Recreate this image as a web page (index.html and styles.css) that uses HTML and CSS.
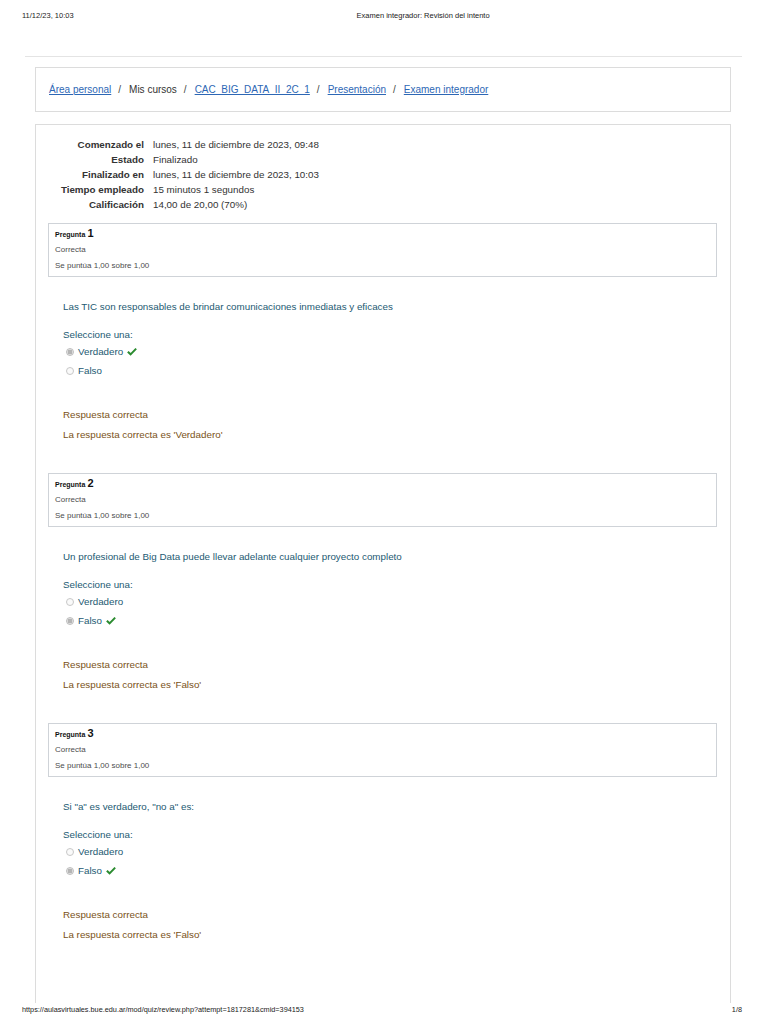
FILE: index.html
```html
<!DOCTYPE html>
<html lang="es">
<head>
<meta charset="utf-8">
<title>Examen integrador: Revisión del intento</title>
<link rel="stylesheet" href="styles.css">
</head>
<body>
<div class="page">
  <header class="print-head">
    <span class="print-date">11/12/23, 10:03</span>
    <span class="print-title">Examen integrador: Revisión del intento</span>
  </header>
  <hr class="rule">

  <nav class="crumbs">
    <a href="#">Área personal</a><span class="sep">/</span><span>Mis cursos</span><span class="sep">/</span><a href="#">CAC_BIG_DATA_II_2C_1</a><span class="sep">/</span><a href="#">Presentación</a><span class="sep">/</span><a href="#">Examen integrador</a>
  </nav>

  <main class="main">
    <table class="summary">
      <tr><th>Comenzado el</th><td>lunes, 11 de diciembre de 2023, 09:48</td></tr>
      <tr><th>Estado</th><td>Finalizado</td></tr>
      <tr><th>Finalizado en</th><td>lunes, 11 de diciembre de 2023, 10:03</td></tr>
      <tr><th>Tiempo empleado</th><td>15 minutos 1 segundos</td></tr>
      <tr><th>Calificación</th><td>14,00 de 20,00 (70%)</td></tr>
    </table>

    <section class="que">
      <div class="info">
        <div class="qno"><span class="qlabel">Pregunta</span> <span class="qnum">1</span></div>
        <div class="state">Correcta</div>
        <div class="grade">Se puntúa 1,00 sobre 1,00</div>
      </div>
      <div class="content">
        <p class="qtext">Las TIC son responsables de brindar comunicaciones inmediatas y eficaces</p>
        <p class="prompt">Seleccione una:</p>
        <div class="opt"><span class="radio checked"></span>Verdadero <svg class="tick" viewBox="0 0 12 10"><path d="M1 5.2 L4.3 8.4 L11 1.6" fill="none" stroke="currentColor" stroke-width="2.4"/></svg></div>
        <div class="opt"><span class="radio"></span>Falso</div>
        <p class="fb-title">Respuesta correcta</p>
        <p class="fb">La respuesta correcta es 'Verdadero'</p>
      </div>
    </section>

    <section class="que">
      <div class="info">
        <div class="qno"><span class="qlabel">Pregunta</span> <span class="qnum">2</span></div>
        <div class="state">Correcta</div>
        <div class="grade">Se puntúa 1,00 sobre 1,00</div>
      </div>
      <div class="content">
        <p class="qtext">Un profesional de Big Data puede llevar adelante cualquier proyecto completo</p>
        <p class="prompt">Seleccione una:</p>
        <div class="opt"><span class="radio"></span>Verdadero</div>
        <div class="opt"><span class="radio checked"></span>Falso <svg class="tick" viewBox="0 0 12 10"><path d="M1 5.2 L4.3 8.4 L11 1.6" fill="none" stroke="currentColor" stroke-width="2.4"/></svg></div>
        <p class="fb-title">Respuesta correcta</p>
        <p class="fb">La respuesta correcta es 'Falso'</p>
      </div>
    </section>

    <section class="que">
      <div class="info">
        <div class="qno"><span class="qlabel">Pregunta</span> <span class="qnum">3</span></div>
        <div class="state">Correcta</div>
        <div class="grade">Se puntúa 1,00 sobre 1,00</div>
      </div>
      <div class="content">
        <p class="qtext">Si "a" es verdadero, "no a" es:</p>
        <p class="prompt">Seleccione una:</p>
        <div class="opt"><span class="radio"></span>Verdadero</div>
        <div class="opt"><span class="radio checked"></span>Falso <svg class="tick" viewBox="0 0 12 10"><path d="M1 5.2 L4.3 8.4 L11 1.6" fill="none" stroke="currentColor" stroke-width="2.4"/></svg></div>
        <p class="fb-title">Respuesta correcta</p>
        <p class="fb">La respuesta correcta es 'Falso'</p>
      </div>
    </section>
  </main>

  <footer class="print-foot">
    <span>https://aulasvirtuales.bue.edu.ar/mod/quiz/review.php?attempt=1817281&amp;cmid=394153</span>
    <span>1/8</span>
  </footer>
</div>
</body>
</html>
```

FILE: styles.css
```css
* { box-sizing: border-box; }
html, body { margin: 0; padding: 0; background: #fff; }
body {
  font-family: "Liberation Sans", Arial, Helvetica, sans-serif;
  color: #333;
  width: 768px;
  height: 1024px;
  overflow: hidden;
}
.page { width: 768px; }

.print-head {
  display: flex;
  padding: 11px 0 0 22px;
  font-size: 7.5px;
  line-height: 9px;
  color: #222;
  height: 20px;
}
.print-title { margin-left: 283px; }

.rule {
  margin: 36px 26px 0 25px;
  border: 0;
  border-top: 1px solid #e4e4e4;
  height: 0;
}

.crumbs {
  margin: 10px 37px 0 35px;
  height: 45px;
  border: 1px solid #dcdcdc;
  display: flex;
  align-items: center;
  padding-left: 13px;
  font-size: 10px;
  color: #333;
}
.crumbs a { color: #2d67b5; text-decoration: underline; }
.crumbs .sep { margin: 0 8px 0 7px; color: #444; }

.main {
  margin: 12px 37px 0 35px;
  height: 879px;
  border: 1px solid #dcdcdc;
  border-bottom: 0;
  padding: 12px 13px 0 12px;
}

.summary {
  border-collapse: collapse;
  font-size: 9.8px;
  line-height: 15px;
  color: #333;
}
.summary th {
  width: 105px;
  text-align: right;
  font-weight: bold;
  padding: 0 9px 0 0;
  white-space: nowrap;
}
.summary td { padding: 0; }

.que { margin-top: 11px; }
.que + .que { margin-top: 31px; }

.info {
  height: 54px;
  border: 1px solid #cfd3d8;
  padding: 4px 6px 0 6px;
  color: #4d4d4d;
  font-size: 8px;
}
.qno { line-height: 11px; color: #111; }
.qlabel { font-weight: bold; font-size: 7px; }
.qnum { font-weight: bold; font-size: 11px; }
.state { line-height: 11px; margin-top: 4px; }
.grade { line-height: 11px; margin-top: 5px; }

.content { padding-left: 15px; font-size: 9.8px; }
.content p { margin: 0; line-height: 14px; }
.qtext { margin-top: 23px !important; color: #235a72; }
.prompt { margin-top: 14px !important; color: #235a72; }
.opt {
  height: 19px;
  line-height: 19px;
  display: flex;
  align-items: center;
  color: #235a72;
  padding-left: 3px;
}
.radio {
  width: 8px;
  height: 8px;
  border-radius: 50%;
  border: 1px solid #c8c8c8;
  background: #fafafa;
  margin-right: 4px;
  flex: none;
}
.radio.checked {
  background: radial-gradient(circle, #b5b5b5 0 2.2px, #e6e6e6 2.6px);
  border-color: #bdbdbd;
}
.tick { width: 10px; height: 9px; color: #2a8b2f; margin-left: 4px; }
.fb-title { margin-top: 28px !important; color: #7a5217; }
.fb { margin-top: 6px !important; color: #7a5217; }

.print-foot {
  display: flex;
  justify-content: space-between;
  padding: 2px 26px 0 22px;
  font-size: 7.3px;
  line-height: 10px;
  color: #222;
}
```
